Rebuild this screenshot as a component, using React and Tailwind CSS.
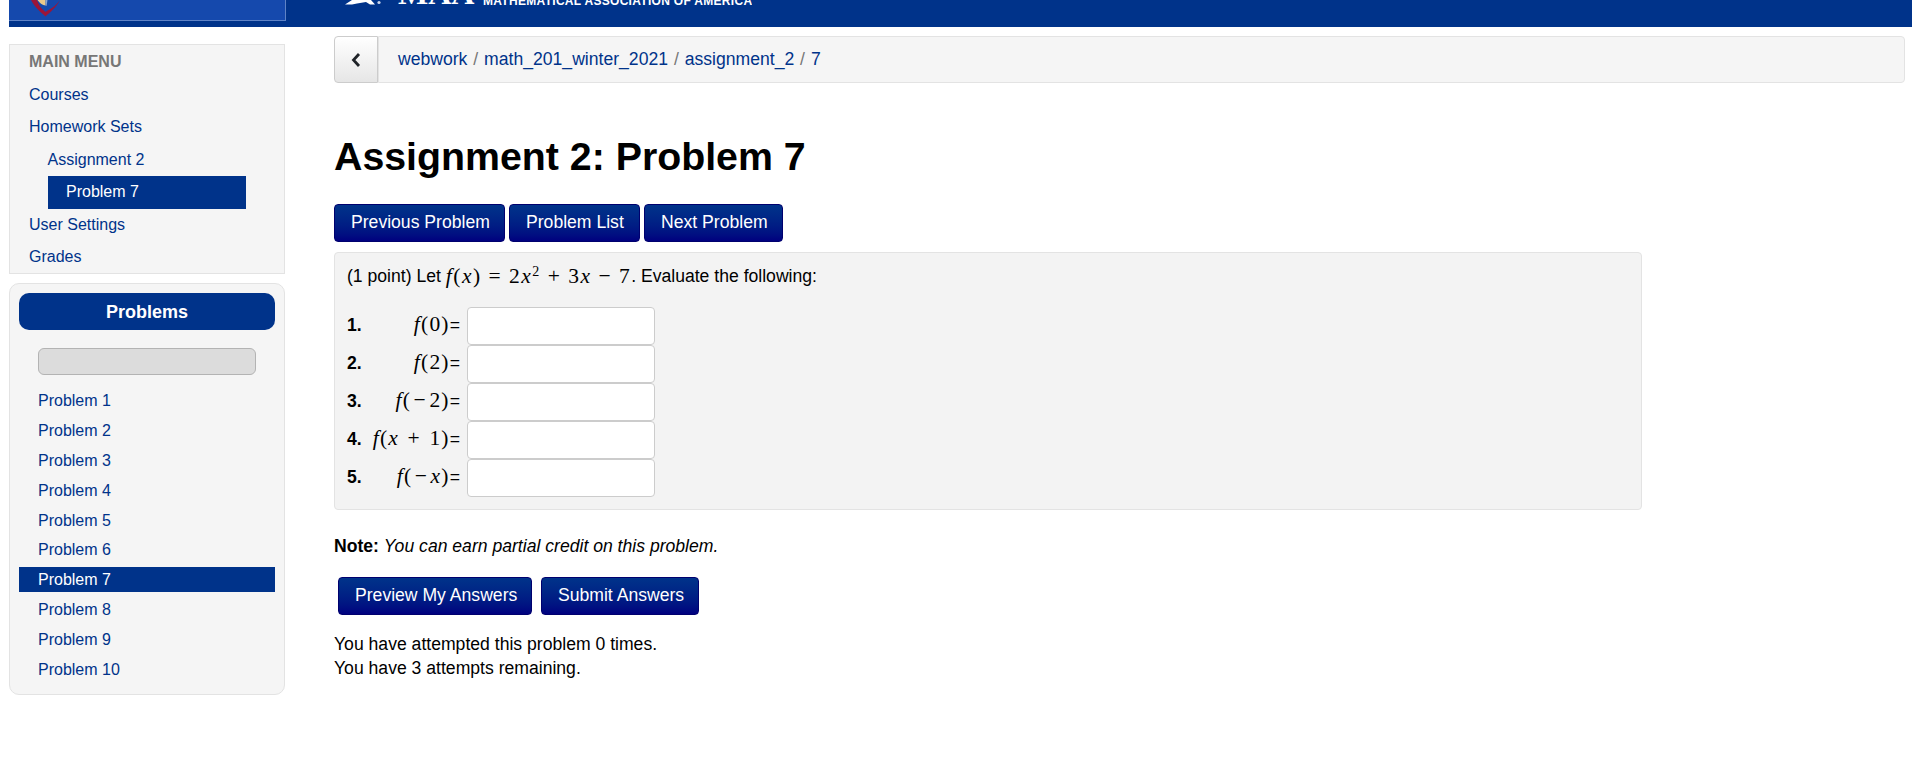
const sans = "font-['Liberation_Sans',Arial,sans-serif]";

const I = ({ children }) => <span className="italic">{children}</span>;

const Math_ = ({ children, className = "" }) => (
  <span className={`font-['Liberation_Serif',serif] text-[21.5px] leading-none whitespace-nowrap ${className}`}>{children}</span>
);

const NavBtn = ({ children, className = "" }) => (
  <button className={`h-[38px] px-[16px] rounded-[4px] border border-[#00006e] bg-gradient-to-b from-[#00338a] to-[#00007f] text-white text-[17.6px] leading-none whitespace-nowrap ${className}`}>
    {children}
  </button>
);

const menu = [
  ["Courses", "pl-[19px]"],
  ["Homework Sets", "pl-[19px]"],
  ["Assignment 2", "pl-[37.5px]"],
];

const Minus = () => <span className="mx-[2.5px]">−</span>;

const rows = [
  ["1.", <><I>f</I>(0)</>],
  ["2.", <><I>f</I>(2)</>],
  ["3.", <><I>f</I>(<Minus />2)</>],
  ["4.", <><I>f</I>(<I>x</I><span className="mx-[8.5px]">+</span>1)</>],
  ["5.", <><I>f</I>(<Minus /><I>x</I>)</>],
];

const problems = [1, 2, 3, 4, 5, 6, 7, 8, 9, 10];

const Sep = () => <span className="text-[#777777] mx-[1px]"> / </span>;

export default function App() {
  return (
    <div className={`${sans} bg-white text-black min-h-[763px] overflow-hidden`}>
      <header className="h-[27px] ml-[9px] bg-[#00338a] overflow-hidden flex">
        <div className="w-[277px] h-[21px] bg-[#1549ad] border-b border-r border-[#5f83c6] shrink-0">
          <svg width="60" height="20" viewBox="0 0 60 20" className="ml-[21px]">
            <path d="M1 0 C5 8 11 12 15.5 16.5 C20 12 26 8 30 0 C26 6 20 9 15.5 12 C12 9 9 6 7 0 Z" fill="#9c1538" />
            <path d="M7.5 0 L15.5 0 L15.5 5.5 C12.5 5.5 10 3 7.5 0 Z" fill="#ecc98a" />
            <path d="M15.5 0 L17.5 0 L16.5 6 L15.5 5.5 Z" fill="#8fa5cc" />
          </svg>
        </div>
        <div className="ml-[59px] flex items-end h-[5px] overflow-hidden text-white shrink-0">
          <svg width="38" height="5" viewBox="0 0 38 5" className="mr-[15px]">
            <path d="M0 4.5 L7 0 L26 0 L30 4.5 L25 4.5 L21 2 L12 3.5 L7 4.5 Z" fill="#fff" />
            <circle cx="34" cy="2.5" r="1.6" fill="#c9d5ea" />
          </svg>
          <span className="font-['Liberation_Serif',serif] font-bold text-[32px] leading-[32px] -mb-[4.2px] w-[85px] whitespace-nowrap">MAA</span>
          <span className="font-bold text-[12px] leading-[12px] -mb-[1.5px] tracking-[0.3px] whitespace-nowrap">MATHEMATICAL ASSOCIATION OF AMERICA</span>
        </div>
      </header>

      <div className="flex pl-[9px]">
        <aside className="w-[276px] shrink-0 pt-[17px] text-[16px] leading-[22.4px] text-[#00338a]">
          <nav className="bg-[#f5f5f5] border border-[#e3e3e3] pt-[1px]">
            <div className="pl-[19px] py-[5px] font-bold text-[#777777]">MAIN MENU</div>
            <div className="pt-[0.5px]">
              {menu.map(([t, c]) => (
                <div key={t} className={`${c} py-[5px]`}>{t}</div>
              ))}
              <div className="ml-[38px] mr-[38px] pl-[18px] py-[5px] bg-[#00338a] text-white">Problem 7</div>
              <div className="pl-[19px] py-[5px]">User Settings</div>
              <div className="pl-[19px] py-[5px]">Grades</div>
            </div>
          </nav>
          <section className="mt-[9px] h-[412px] bg-[#f5f5f5] border border-[#e3e3e3] rounded-[10px] px-[9px] pt-[9px]">
            <h2 className="h-[37px] rounded-[10px] bg-[#00338a] text-white font-bold text-[18px] flex items-center justify-center">Problems</h2>
            <div className="mt-[18px] mx-[19px] h-[27px] bg-[#dcdcdc] border border-[#b3b3b3] rounded-[6px]" />
            <ul className="mt-[13px]">
              {problems.map((n) => (
                <li key={n} className={`h-[24.8px] leading-[26.4px] mb-[5px] pl-[19px] ${n === 7 ? "bg-[#00338a] text-white" : ""}`}>Problem {n}</li>
              ))}
            </ul>
          </section>
        </aside>

        <main className="ml-[49px] w-[1571px] pt-[9px] text-[17.6px] leading-[24.64px]">
          <div className="flex h-[47px]">
            <button className="w-[44px] bg-gradient-to-b from-white to-[#e6e6e6] border border-[#cccccc] rounded-l-[4px] flex items-center justify-center">
              <svg width="12" height="16" viewBox="0 0 12 16">
                <path d="M9 2 L3.5 8 L9 14" fill="none" stroke="#1f2328" strokeWidth="2.8" />
              </svg>
            </button>
            <div className="flex-1 bg-[#f5f5f5] border border-[#e3e3e3] rounded-r-[4px] flex items-center pl-[19px] pb-[1px] whitespace-pre text-[#00338a]">
              webwork<Sep />math_201_winter_2021<Sep />assignment_2<Sep />7
            </div>
          </div>

          <h1 className="mt-[48px] text-[39.3px] leading-[50px] font-bold">Assignment 2: Problem 7</h1>

          <div className="mt-[23px] flex gap-[4px]">
            <NavBtn className="w-[171px]">Previous Problem</NavBtn>
            <NavBtn className="w-[131px]">Problem List</NavBtn>
            <NavBtn className="w-[139px]">Next Problem</NavBtn>
          </div>

          <div className="mt-[10px] w-[1308px] h-[258px] bg-[#f3f3f3] border border-[#e3e3e3] rounded-[4px] pl-[12px] pt-[11px]">
            <div className="whitespace-pre flex items-center h-[25px]">
              (1 point) Let <Math_ className="tracking-[1.5px]"><I>f</I>(<I>x</I>) = 2<I>x</I><sup className="text-[14px]">2</sup> + 3<I>x</I> − 7</Math_>. Evaluate the following:
            </div>
            <div className="mt-[18px] flex flex-col">
              {rows.map(([n, m]) => (
                <div key={n} className="flex items-center h-[38px]">
                  <span className="font-bold w-[26px] pb-[2px]">{n}</span>
                  <span className="w-[94px] flex justify-end items-center pr-[7px] pb-[2px]">
                    <Math_ className="tracking-[1.2px]">{m}</Math_>=
                  </span>
                  <input className="w-[188px] h-[38px] bg-white border border-[#cccccc] rounded-[4px]" />
                </div>
              ))}
            </div>
          </div>

          <p className="mt-[24px]"><b>Note:</b> <em>You can earn partial credit on this problem.</em></p>

          <div className="mt-[18px] ml-[4px] flex gap-[9px]">
            <NavBtn className="w-[194px]">Preview My Answers</NavBtn>
            <NavBtn className="w-[158px]">Submit Answers</NavBtn>
          </div>

          <p className="mt-[17px]">You have attempted this problem 0 times.<br />You have 3 attempts remaining.</p>
        </main>
      </div>
    </div>
  );
}
